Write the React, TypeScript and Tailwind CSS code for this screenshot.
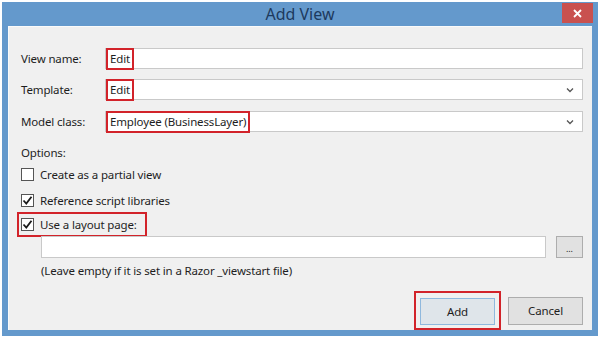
import React from "react"

const font = { fontFamily: '"Noto Sans", "Open Sans", sans-serif', letterSpacing: "-0.15px" }

const Chevron = () => (
  <svg width="8" height="6" viewBox="0 0 8 6" className="text-[#555]">
    <path d="M1 1.5 L4 4.5 L7 1.5" fill="none" stroke="currentColor" strokeWidth="1.3" />
  </svg>
)

const Check = ({ checked }: { checked?: boolean }) => (
  <div className="w-[13px] h-[13px] bg-white border border-[#555] flex items-center justify-center shrink-0">
    {checked && (
      <svg width="11" height="11" viewBox="0 0 11 11">
        <path d="M1.5 5.5 L4.3 8.5 L9.5 1.8" fill="none" stroke="#1a1a1a" strokeWidth="1.8" />
      </svg>
    )}
  </div>
)

const Red = ({ children }: { children: React.ReactNode }) => (
  <span className="border-2 border-[#d2232a] px-[2px] -my-[2px] h-[22px] flex items-center leading-none">
    {children}
  </span>
)

const Row = ({ label, value, dropdown }: { label: string; value: string; dropdown?: boolean }) => (
  <div className="flex items-center h-[21px]">
    <div className="w-[84px]">{label}</div>
    <div className="flex-1 h-[21px] bg-white border border-[#c9c9c9] flex items-center justify-between pr-[8px]">
      <Red>{value}</Red>
      {dropdown && <Chevron />}
    </div>
  </div>
)

export default function App() {
  return (
    <div className="w-[602px] h-[339px] bg-white pt-[2px] pl-[2px] pr-[4px] pb-[3px] text-[11.5px] text-[#1e1e1e]" style={font}>
      <div className="w-full h-full bg-[#6499cc] flex flex-col px-[6px] pb-[6px]">
        <div className="h-[31px] relative flex items-center justify-center">
          <span className="text-[16px] text-[#1d3a5e] tracking-normal">Add View</span>
          <div className="absolute right-[-1px] top-[1px] w-[31px] h-[20px] bg-[#c9514f] flex items-center justify-center">
            <svg width="9" height="9" viewBox="0 0 9 9">
              <path d="M1 1 L8 8 M8 1 L1 8" stroke="white" strokeWidth="1.8" />
            </svg>
          </div>
        </div>
        <div className="flex-1 bg-[#f0f0f0] border-t border-l border-[#fafafa] pl-[12px] pr-[9px] pt-[21px] flex flex-col">
          <div className="flex flex-col gap-[10px]">
            <Row label="View name:" value="Edit" />
            <Row label="Template:" value="Edit" dropdown />
            <div className="mt-[1px]">
              <Row label="Model class:" value="Employee (BusinessLayer)" dropdown />
            </div>
          </div>
          <div className="mt-[12px] h-[17px] flex items-center">Options:</div>
          <div className="mt-[5px] h-[17px] flex items-center gap-[6px]">
            <Check />
            <span>Create as a partial view</span>
          </div>
          <div className="mt-[9px] h-[17px] flex items-center gap-[6px]">
            <Check checked />
            <span>Reference script libraries</span>
          </div>
          <div className="mt-[3px] -ml-[4px] w-[130px] h-[25px] border-2 border-[#d2232a] flex items-center gap-[6px] pl-[2px]">
            <Check checked />
            <span>Use a layout page:</span>
          </div>
          <div className="mt-[-1px] ml-[20px] flex items-center gap-[10px]">
            <div className="flex-1 h-[22px] bg-white border border-[#c9c9c9]" />
            <div className="w-[27px] h-[22px] bg-[#e1e1e1] border border-[#adadad] flex items-end justify-center pb-[4px] text-[9px] leading-none">
              ...
            </div>
          </div>
          <div className="mt-[4px] ml-[20px] h-[17px] flex items-center">
            (Leave empty if it is set in a Razor _viewstart file)
          </div>
          <div className="mt-[12px] flex justify-end items-center gap-[7px]">
            <div className="border-2 border-[#d2232a] px-[4px] pt-[5px] pb-[3px]">
              <div className="w-[75px] h-[27px] bg-[#dfe5ea] border border-[#8fb8dd] flex items-center justify-center">
                Add
              </div>
            </div>
            <div className="w-[75px] h-[28px] bg-[#e1e1e1] border border-[#adadad] flex items-center justify-center mt-[1px]">
              Cancel
            </div>
          </div>
        </div>
      </div>
    </div>
  )
}
